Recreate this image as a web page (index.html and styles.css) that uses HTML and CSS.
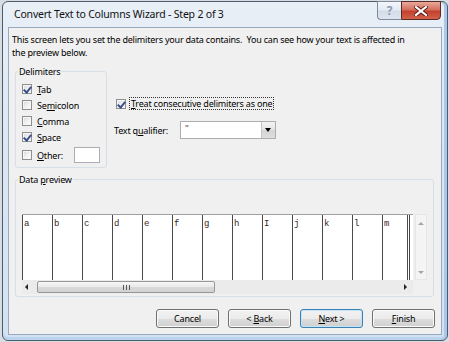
FILE: index.html
```html
<!DOCTYPE html>
<html lang="en">
<head>
  <meta charset="UTF-8">
  <title>Convert Text to Columns Wizard</title>
  <link rel="stylesheet" href="styles.css">
</head>
<body>
  <div class="window">
    <div class="titlebar">
      <span class="title">Convert Text to Columns Wizard - Step 2 of 3</span>
      <div class="caption">
        <span class="help">?</span>
        <span class="close">
          <svg width="14" height="10" viewBox="0 0 14 10">
            <path d="M2 1 L12 9 M12 1 L2 9" stroke="#5a1a12" stroke-width="4" stroke-linecap="square"/>
            <path d="M2 1 L12 9 M12 1 L2 9" stroke="#fff" stroke-width="2.2" stroke-linecap="square"/>
          </svg>
        </span>
      </div>
    </div>

    <div class="client">
      <p class="intro">This screen lets you set the delimiters your data contains.&nbsp; You can see how your text is affected in the preview below.</p>

      <div class="options">
        <fieldset class="group delims">
          <legend>Delimiters</legend>
          <label class="check"><span class="box on"></span><span><u>T</u>ab</span></label>
          <label class="check"><span class="box"></span><span>Se<u>m</u>icolon</span></label>
          <label class="check"><span class="box"></span><span><u>C</u>omma</span></label>
          <label class="check"><span class="box on"></span><span><u>S</u>pace</span></label>
          <label class="check other"><span class="box"></span><span><u>O</u>ther:</span><span class="textbox"></span></label>
        </fieldset>

        <div class="side">
          <label class="check treat"><span class="box on"></span><span class="focus"><u>T</u>reat consecutive delimiters as one</span></label>
          <div class="qualifier">
            <span class="qlabel">Text q<u>u</u>alifier:</span>
            <div class="combo">
              <span class="value">"</span>
              <span class="drop"></span>
            </div>
          </div>
        </div>
      </div>

      <fieldset class="group preview">
        <legend>Data <u>p</u>review</legend>
        <div class="preview-body">
          <div class="data">
            <div class="cols">
              <div class="col">a</div>
              <div class="col">b</div>
              <div class="col">c</div>
              <div class="col">d</div>
              <div class="col">e</div>
              <div class="col">f</div>
              <div class="col">g</div>
              <div class="col">h</div>
              <div class="col">I</div>
              <div class="col">j</div>
              <div class="col">k</div>
              <div class="col">l</div>
              <div class="col">m</div>
            </div>
            <div class="hscroll">
              <span class="arrow left"></span>
              <div class="thumb"><span class="grip"></span></div>
              <span class="arrow right"></span>
            </div>
          </div>
          <div class="vscroll">
            <span class="arrow up"></span>
            <span class="arrow down"></span>
          </div>
        </div>
      </fieldset>

      <div class="buttons">
        <button>Cancel</button>
        <button>&lt; <u>B</u>ack</button>
        <button class="default"><u>N</u>ext &gt;</button>
        <button><u>F</u>inish</button>
      </div>
    </div>
  </div>
</body>
</html>
```

FILE: styles.css
```css
* {
  box-sizing: border-box;
}

body {
  margin: 0;
  background: #d8dde3;
  font-family: "Noto Sans", sans-serif;
  font-size: 9px;
  letter-spacing: -0.2px;
  color: #000;
}

/* Window frame */
.window {
  margin: 1px 0 0 2px;
  width: 446px;
  height: 340px;
  border: 1px solid #4d5b6b;
  border-radius: 6px;
  padding: 0 5px 5px 5px;
  background: linear-gradient(180deg, #e8eff7 0%, #dde7f2 40%, #d3e2f2 100%);
  box-shadow: inset -3px 0 0 #a9c9ec, inset 0 -3px 0 #bcd5ef;
}

.titlebar {
  display: flex;
  align-items: flex-start;
  height: 25px;
}

.title {
  padding-left: 6px;
  line-height: 25px;
  font-size: 10.5px;
  color: #111;
}

.caption {
  display: flex;
  margin-left: auto;
  margin-right: 1px;
  margin-top: -1px;
  height: 19px;
}

.help {
  width: 24px;
  height: 19px;
  border: 1px solid #7d8b9b;
  border-right: none;
  border-radius: 0 0 0 4px;
  background: linear-gradient(180deg, #f4f7fb 0%, #e3eaf3 48%, #d2dce8 52%, #dde6f0 100%);
  color: #909cab;
  font-weight: bold;
  font-size: 12px;
  line-height: 17px;
  text-align: center;
}

.close {
  display: flex;
  align-items: center;
  justify-content: center;
  width: 40px;
  height: 19px;
  border: 1px solid #5c2a25;
  border-radius: 0 0 4px 0;
  background: linear-gradient(180deg, #e9a99b 0%, #d56f5d 45%, #c2412e 55%, #d1614a 100%);
}

/* Client area */
.client {
  display: flex;
  flex-direction: column;
  height: 308px;
  border: 1px solid #9aaabe;
  background: #f0f0f0;
}

.intro {
  margin: 5px 24px 0 3px;
  line-height: 13px;
}

.options {
  display: flex;
  align-items: flex-start;
  margin: 7px 0 0 6px;
}

.group {
  margin: 0;
  border: 1px solid #d5dfe5;
  border-radius: 3px;
}

.group legend {
  padding: 0 1px;
  line-height: 11px;
}

.delims {
  width: 92px;
  height: 102px;
  padding: 4px 0 0 2px;
}

.check {
  display: flex;
  align-items: center;
  gap: 5px;
  height: 16px;
  margin-left: 4px;
}

.box {
  flex: none;
  position: relative;
  width: 10px;
  height: 10px;
  border: 1px solid #8e8f8f;
  background: linear-gradient(135deg, #d8d8d8 0%, #f4f4f4 60%, #ffffff 100%);
  box-shadow: inset 0 0 0 1px #f6f6f6;
}

.box.on::after {
  content: "";
  position: absolute;
  left: 2px;
  top: 0;
  width: 3px;
  height: 6px;
  border: solid #3c4f8a;
  border-width: 0 2px 2px 0;
  transform: rotate(40deg);
}

.other {
  margin-top: 2px;
  margin-right: 6px;
}

.textbox {
  margin-left: auto;
  width: 26px;
  height: 16px;
  border: 1px solid #abadb3;
  background: #fff;
}

.side {
  margin: 31px 0 0 7px;
}

.treat {
  margin-left: 2px;
  height: 13px;
  gap: 3px;
}

.focus {
  border: 1px dotted #333;
  padding: 0 1px;
  line-height: 11px;
}

.qualifier {
  display: flex;
  align-items: center;
  margin-top: 11px;
}

.qlabel {
  width: 66px;
}

.combo {
  display: flex;
  width: 96px;
  height: 18px;
  border: 1px solid #abadb3;
  background: #fff;
}

.value {
  flex: 1;
  padding-left: 4px;
  line-height: 14px;
  color: #444;
}

.drop {
  position: relative;
  width: 14px;
  border-left: 1px solid #c5c5c5;
  background: linear-gradient(180deg, #f3f3f3 0%, #e4e4e4 50%, #d4d4d4 51%, #dedede 100%);
}

.drop::after {
  content: "";
  position: absolute;
  left: 3px;
  top: 6px;
  border: 3.5px solid transparent;
  border-top: 4px solid #000;
}

/* Data preview */
.preview {
  width: 419px;
  height: 123px;
  margin: 6px 0 0 6px;
  padding: 29px 0 0 2px;
}

.preview-body {
  display: flex;
  margin-left: 4px;
}

.data {
  width: 391px;
}

.cols {
  display: flex;
  height: 66px;
  border-top: 1px solid #a0a0a0;
  background: #fff;
}

.col {
  width: 30px;
  border-left: 1px solid #4a4a4a;
  padding: 4px 0 0 1px;
  font-family: "Liberation Mono", monospace;
  font-size: 9px;
  letter-spacing: 0;
  line-height: 10px;
  color: #3a1f1f;
}

.col:last-child {
  width: 28px;
  border-right: 3px double #4a4a4a;
}

.hscroll {
  position: relative;
  display: flex;
  align-items: center;
  height: 14px;
  background: #ebebeb;
}

.arrow {
  display: block;
  width: 0;
  height: 0;
  border: 3px solid transparent;
}

.arrow.left {
  margin-left: 3px;
  border-right: 3px solid #222;
  border-left: none;
}

.arrow.right {
  margin-left: auto;
  margin-right: 6px;
  border-left: 3px solid #222;
  border-right: none;
}

.thumb {
  display: flex;
  justify-content: center;
  align-items: center;
  width: 178px;
  height: 12px;
  margin-left: 9px;
  border: 1px solid #979797;
  border-radius: 2px;
  background: linear-gradient(180deg, #f6f6f6 0%, #e9e9e9 50%, #d9d9d9 51%, #d2d2d2 100%);
}

.grip {
  width: 7px;
  height: 5px;
  border-left: 1px solid #555;
  border-right: 1px solid #555;
  background: linear-gradient(90deg, transparent 2px, #555 2px, #555 3px, transparent 3px);
}

.vscroll {
  display: flex;
  flex-direction: column;
  align-items: center;
  justify-content: space-between;
  width: 12px;
  height: 66px;
  margin-left: 2px;
  padding: 7px 0 5px;
  border: 1px solid #e6e6e6;
  background: #f4f4f4;
}

.arrow.up {
  border-bottom: 3px solid #a5a5a5;
  border-top: none;
}

.arrow.down {
  border-top: 3px solid #a5a5a5;
  border-bottom: none;
}

/* Buttons */
.buttons {
  display: flex;
  justify-content: flex-end;
  gap: 9px;
  margin-top: 12px;
  padding-right: 6px;
}

button {
  width: 63px;
  height: 19px;
  padding: 0;
  border: 1px solid #707070;
  border-radius: 3px;
  background: linear-gradient(180deg, #f2f2f2 0%, #ebebeb 50%, #dddddd 51%, #cfcfcf 100%);
  box-shadow: inset 0 0 0 1px #fbfbfb;
  font-family: "Noto Sans", sans-serif;
  font-size: 9px;
  letter-spacing: -0.2px;
  color: #000;
}

button.default {
  border-color: #3c7fb1;
  box-shadow: inset 0 0 0 1px #bfe6fb;
}
```
